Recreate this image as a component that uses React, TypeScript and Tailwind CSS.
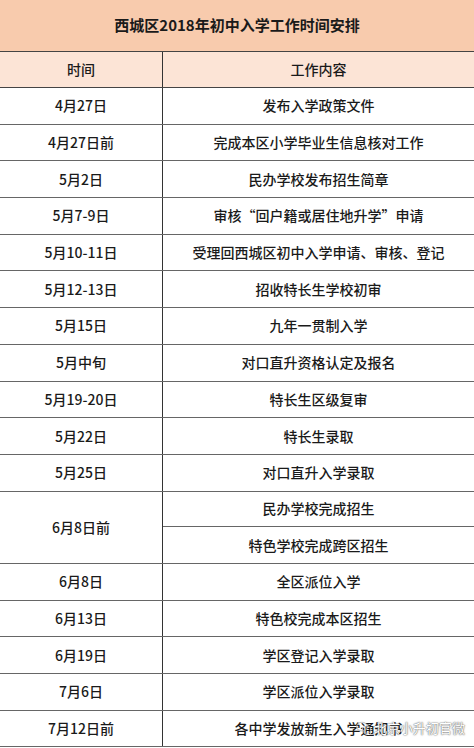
import React from 'react';

type Row = { date: string; items: string[] };

const rows: Row[] = [
  { date: '4月27日', items: ['发布入学政策文件'] },
  { date: '4月27日前', items: ['完成本区小学毕业生信息核对工作'] },
  { date: '5月2日', items: ['民办学校发布招生简章'] },
  { date: '5月7-9日', items: ['审核“回户籍或居住地升学”申请'] },
  { date: '5月10-11日', items: ['受理回西城区初中入学申请、审核、登记'] },
  { date: '5月12-13日', items: ['招收特长生学校初审'] },
  { date: '5月15日', items: ['九年一贯制入学'] },
  { date: '5月中旬', items: ['对口直升资格认定及报名'] },
  { date: '5月19-20日', items: ['特长生区级复审'] },
  { date: '5月22日', items: ['特长生录取'] },
  { date: '5月25日', items: ['对口直升入学录取'] },
  { date: '6月8日前', items: ['民办学校完成招生', '特色学校完成跨区招生'] },
  { date: '6月8日', items: ['全区派位入学'] },
  { date: '6月13日', items: ['特色校完成本区招生'] },
  { date: '6月19日', items: ['学区登记入学录取'] },
  { date: '7月6日', items: ['学区派位入学录取'] },
  { date: '7月12日前', items: ['各中学发放新生入学通知书'] },
];

const font = { fontFamily: '"Noto Sans CJK SC", "Noto Sans", sans-serif' };

export default function App() {
  return (
    <div className="relative w-[474px] h-[748px] overflow-hidden bg-white text-[#1a1a1a] text-[14px] font-medium" style={font}>
      <div className="h-[52px] bg-[#f8cbad] border-b border-[#444] flex items-center justify-center text-[15px] font-bold">
        西城区2018年初中入学工作时间安排
      </div>
      <div className="h-[36px] bg-[#fce4d6] border-b border-[#444] flex">
        <div className="w-[163px] border-r border-[#333] flex items-center justify-center">时间</div>
        <div className="flex-1 flex items-center justify-center">工作内容</div>
      </div>
      <div className="flex flex-col">
        {rows.map((r) => (
          <div key={r.date} className="flex border-b border-[#666]">
            <div className="w-[163px] border-r border-[#333] flex items-center justify-center">{r.date}</div>
            <div className="flex-1 flex flex-col">
              {r.items.map((t, i) => (
                <div
                  key={t}
                  className={`h-[35.7px] flex items-center justify-center ${i < r.items.length - 1 ? 'border-b border-[#666]' : ''}`}
                >
                  {t}
                </div>
              ))}
            </div>
          </div>
        ))}
      </div>
      <div className="absolute left-[356px] top-[718px] flex items-center gap-[2px] text-white text-[13px] font-normal [text-shadow:0_0_1px_#555,0_0_2px_#777]">
        <svg width="16" height="14" viewBox="0 0 24 20" className="opacity-80">
          <ellipse cx="9" cy="8" rx="8" ry="6.5" fill="none" stroke="#bbb" strokeWidth="1.6" />
          <ellipse cx="16" cy="12.5" rx="6.5" ry="5.2" fill="none" stroke="#bbb" strokeWidth="1.6" />
        </svg>
        <span>北京小升初官微</span>
      </div>
    </div>
  );
}
